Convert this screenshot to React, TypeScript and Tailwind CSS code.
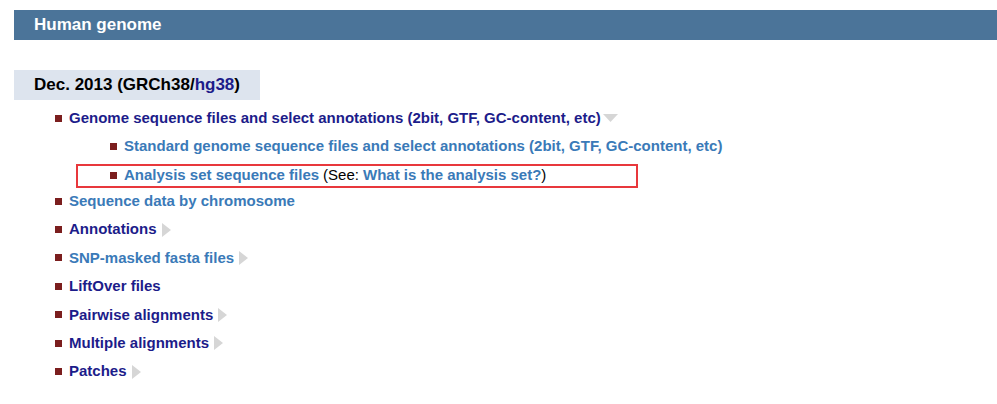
const DARK = "text-[#1c1c8a]";
const LIGHT = "text-[#3a7ab8]";

const Bullet = () => <span className="mr-[7px] inline-block h-[7px] w-[7px] shrink-0 bg-[#7b1e1e]" />;

const RightArrow = () => (
  <svg width="9" height="14" viewBox="0 0 9 14" className="ml-[5px] inline-block">
    <path d="M0 0 L9 7 L0 14 Z" fill="#d6d6d6" />
  </svg>
);

const DownArrow = () => (
  <svg width="15" height="8" viewBox="0 0 15 8" className="ml-[2px] inline-block">
    <path d="M0 0 L15 0 L7.5 8 Z" fill="#d6d6d6" />
  </svg>
);

type Item = { label: string; color: string; arrow?: boolean };

const items: Item[] = [
  { label: "Sequence data by chromosome", color: LIGHT },
  { label: "Annotations", color: DARK, arrow: true },
  { label: "SNP-masked fasta files", color: LIGHT, arrow: true },
  { label: "LiftOver files", color: DARK },
  { label: "Pairwise alignments", color: DARK, arrow: true },
  { label: "Multiple alignments", color: DARK, arrow: true },
  { label: "Patches", color: DARK, arrow: true },
];

export default function App() {
  return (
    <div className="min-h-[404px] bg-white pt-[10px] pl-[14px] font-['Liberation_Sans',Arial,sans-serif] text-[15px] font-bold">
      <div className="flex h-[30px] items-center bg-[#4b7499] pl-[20px] text-[17px] text-white">Human genome</div>

      <div className="mt-[30px] flex h-[30px] w-[246px] items-center bg-[#dde4ee] pl-[20px] text-[17px] text-black">
        Dec. 2013 (GRCh38/<span className="text-[#1c1c8a]">hg38</span>)
      </div>

      <ul className="mt-[4px] pl-[41px]">
        <li className="flex h-[28px] items-center">
          <Bullet />
          <span className={DARK}>Genome sequence files and select annotations (2bit, GTF, GC-content, etc)</span>
          <DownArrow />
        </li>
        <li className="flex h-[29px] items-center pl-[55px]">
          <Bullet />
          <span className={LIGHT}>Standard genome sequence files and select annotations (2bit, GTF, GC-content, etc)</span>
        </li>
        <li className="flex h-[26px] items-center pl-[55px]">
          <div className="-ml-[34px] mt-[3px] flex h-[24px] w-[562px] items-center border-2 border-[#e8383c] pl-[32px]">
            <Bullet />
            <span className={LIGHT}>Analysis set sequence files</span>
            <span className="ml-[4px] font-normal text-black">(See: </span>
            <span className={`ml-[4px] ${LIGHT}`}>What is the analysis set?</span>
            <span className="font-normal text-black">)</span>
          </div>
        </li>
        {items.map((it) => (
          <li key={it.label} className="flex h-[28.4px] items-center">
            <Bullet />
            <span className={it.color}>{it.label}</span>
            {it.arrow && <RightArrow />}
          </li>
        ))}
      </ul>
    </div>
  );
}
